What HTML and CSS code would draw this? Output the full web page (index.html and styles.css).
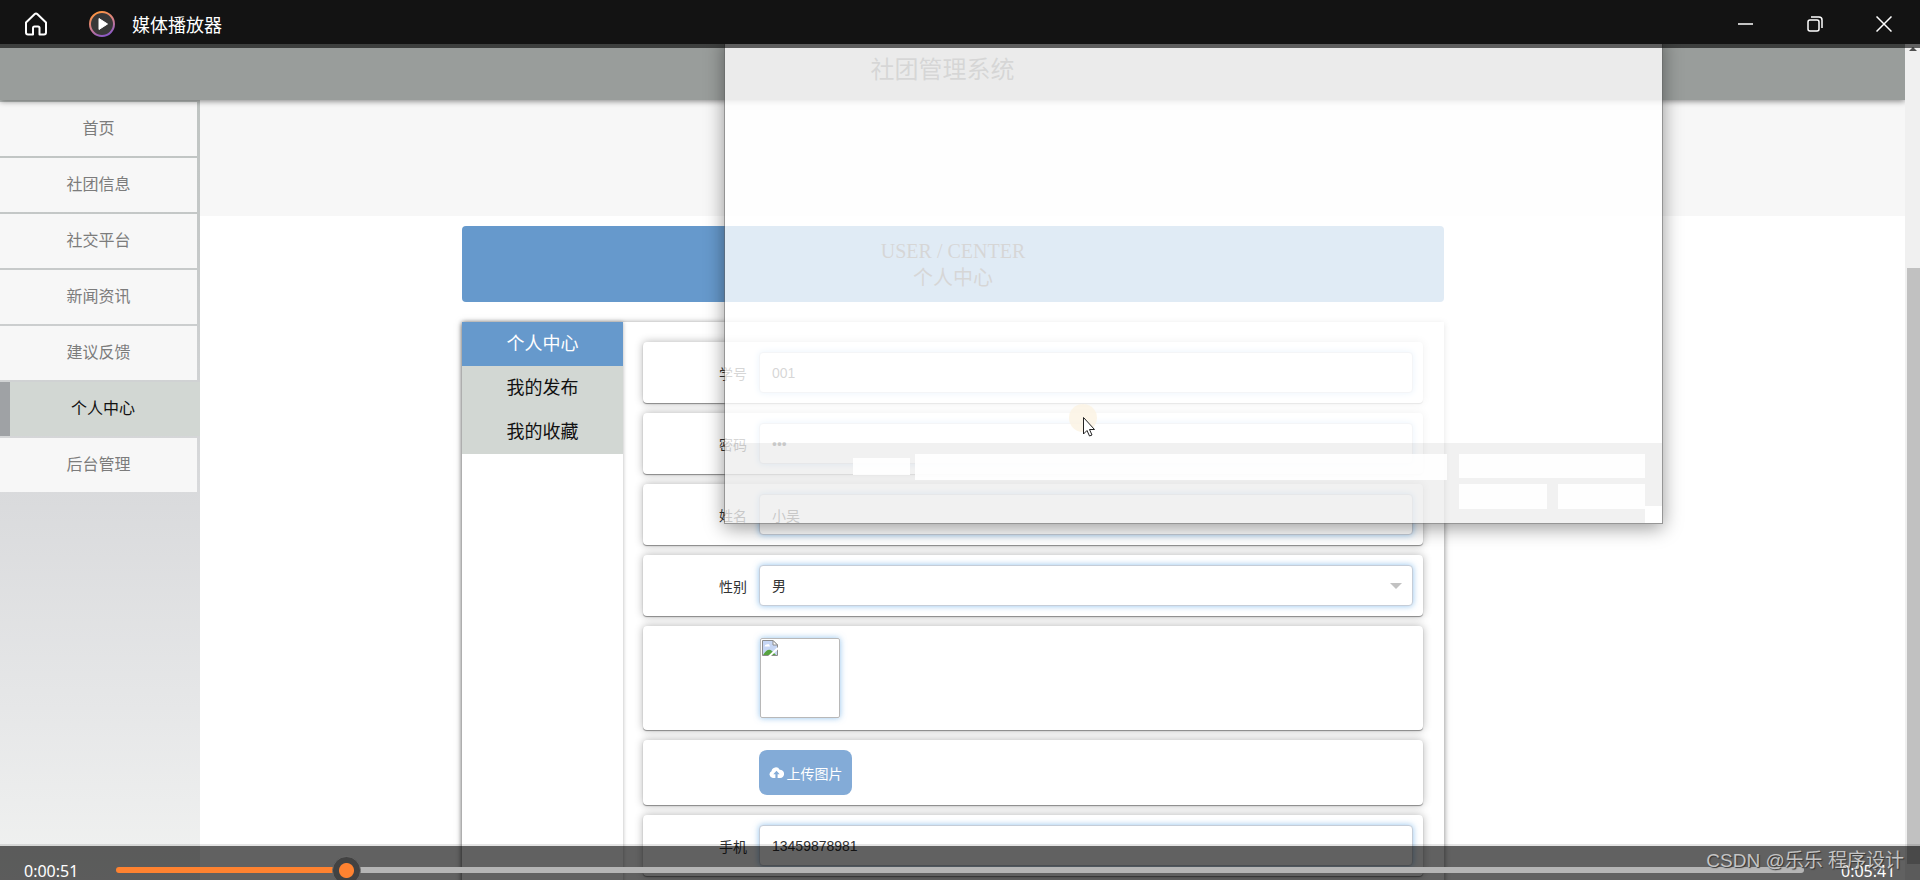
FILE: index.html
```html
<!DOCTYPE html>
<html lang="zh-CN">

<head>
    <meta charset="UTF-8">
    <title>媒体播放器</title>
    <link rel="stylesheet" href="styles.css">
</head>

<body>
    <div class="player">
        <!-- 标题栏 -->
        <header class="titlebar">
            <button class="icon-btn home-btn" aria-label="主页">
                <svg width="24" height="26" viewBox="0 0 24 26" fill="none" stroke="#fff" stroke-width="2" stroke-linejoin="round">
                    <path d="M2 11.5 10.500 3.200Q12 1.800 13.500 3.200L22 11.500V21.500Q22 23.500 20 23.500H15.500V17Q15.500 15.500 14 15.500H10.500Q9 15.500 9 17V23.500H4Q2 23.500 2 21.500Z" />
                </svg>
            </button>
            <svg class="logo" width="28" height="28" viewBox="0 0 28 28">
                <defs>
                    <linearGradient id="ring" x1="0.3" y1="0" x2="0.7" y2="1">
                        <stop offset="0" stop-color="#ff9540" />
                        <stop offset="0.5" stop-color="#d17f8d" />
                        <stop offset="1" stop-color="#8757c8" />
                    </linearGradient>
                </defs>
                <circle cx="14" cy="14" r="12" fill="#383838" stroke="url(#ring)" stroke-width="2" />
                <path d="M11 8.500V19.500L19.500 14Z" fill="#fff" stroke="#fff" stroke-linejoin="round" />
            </svg>
            <span class="app-name">媒体播放器</span>
            <div class="window-buttons">
                <button class="icon-btn" aria-label="最小化">
                    <svg width="16" height="16" viewBox="0 0 16 16"><path d="M0 8H15" stroke="#fff" stroke-width="1.500" /></svg>
                </button>
                <button class="icon-btn" aria-label="还原">
                    <svg width="16" height="16" viewBox="0 0 16 16" fill="none" stroke="#fff" stroke-width="1.500">
                        <rect x="1" y="4" width="11" height="11" rx="2" />
                        <path d="M4 1H12Q15 1 15 4V12" />
                    </svg>
                </button>
                <button class="icon-btn" aria-label="关闭">
                    <svg width="16" height="16" viewBox="0 0 16 16"><path d="M0.500 0.500 15.500 15.500M15.500 0.500 0.500 15.500" stroke="#fff" stroke-width="1.500" /></svg>
                </button>
            </div>
        </header>

        <!-- 视频画面 -->
        <div class="screen">
            <div class="page">
                <div class="page-header">
                    <h1>社团管理系统</h1>
                </div>
                <div class="page-body">
                    <nav class="sidebar">
                        <a href="#">首页</a>
                        <a href="#">社团信息</a>
                        <a href="#">社交平台</a>
                        <a href="#">新闻资讯</a>
                        <a href="#">建议反馈</a>
                        <a href="#" class="active">个人中心</a>
                        <a href="#">后台管理</a>
                    </nav>
                    <main class="content">
                        <div class="banner"></div>
                        <div class="container">
                            <div class="center-title">
                                <span>USER / CENTER</span>
                                <span>个人中心</span>
                            </div>
                            <div class="panel">
                                <div class="panel-menu">
                                    <a href="#" class="active">个人中心</a>
                                    <a href="#">我的发布</a>
                                    <a href="#">我的收藏</a>
                                </div>
                                <form class="panel-form">
                                    <div class="form-item">
                                        <label for="xuehao">学号</label>
                                        <input id="xuehao" type="text" value="001">
                                    </div>
                                    <div class="form-item">
                                        <label for="mima">密码</label>
                                        <input id="mima" type="password" value="001">
                                    </div>
                                    <div class="form-item">
                                        <label for="xingming">姓名</label>
                                        <input id="xingming" type="text" value="小吴">
                                    </div>
                                    <div class="form-item">
                                        <label for="xingbie">性别</label>
                                        <div class="select-box">
                                            <select id="xingbie">
                                                <option>男</option>
                                                <option>女</option>
                                            </select>
                                        </div>
                                    </div>
                                    <div class="form-item photo-item">
                                        <div class="photo">
                                            <svg width="16" height="16" viewBox="0 0 16 16">
                                                <path d="M0.500 0.500H11L15.500 5V15.500H0.500Z" fill="#c6d6f4" stroke="#8c8c8c" />
                                                <path d="M2.500 6.500Q3 4 5 4.500Q7 3 8 6.500Z" fill="#fff" />
                                                <path d="M1 15Q6 7 10 11L14 15Z" fill="#57a33f" />
                                                <path d="M16 8 7 16.500" stroke="#fff" stroke-width="2" />
                                                <path d="M11 0.500V5H15.500Z" fill="#fff" stroke="#8c8c8c" />
                                            </svg>
                                        </div>
                                    </div>
                                    <div class="form-item">
                                        <button type="button" class="upload-btn">
                                            <svg width="15" height="11" viewBox="0 0 16 12">
                                                <path d="M4 12A4 4 0 0 1 2.500 4.500A4.800 4.800 0 0 1 11.500 3A4.500 4.500 0 0 1 12 12Z" fill="#fff" />
                                                <path d="M8 4 11.500 8H9.200V12H6.800V8H4.500Z" fill="#83abd7" />
                                            </svg>
                                            上传图片
                                        </button>
                                    </div>
                                    <div class="form-item">
                                        <label for="shouji">手机</label>
                                        <input id="shouji" type="text" value="13459878981">
                                    </div>
                                </form>
                            </div>
                        </div>
                    </main>
                </div>
            </div>
            <div class="scrollbar">
                <div class="scroll-arrow"></div>
                <div class="scroll-thumb"></div>
            </div>

            <!-- 正在淡出的窗口 -->
            <div class="ghost-window">
                <div class="ghost-body"></div>
                <div class="ghost-footer">
                    <div class="ghost-block small"></div>
                    <div class="ghost-block wide"></div>
                    <div class="ghost-grid">
                        <div class="ghost-block full"></div>
                        <div class="ghost-block"></div>
                        <div class="ghost-block"></div>
                    </div>
                    <div class="ghost-corner"></div>
                </div>
            </div>

            <!-- 鼠标指针 -->
            <svg class="cursor" width="36" height="40" viewBox="0 0 36 40">
                <circle cx="15" cy="15" r="14" fill="#fbf3e2" fill-opacity="0.8" />
                <path d="M15.500 14.500V31L19 27.500L21.500 33L24 32L21.500 26.500H26.500Z" fill="#fff" stroke="#222" />
            </svg>
        </div>

        <!-- 播放控制条 -->
        <div class="controls">
            <span class="time">0:00:51</span>
            <input class="progress" type="range" min="0" max="100" value="13" aria-label="播放进度">
            <span class="time">0:05:41</span>
        </div>
        <div class="watermark">CSDN @乐乐 程序设计</div>
    </div>
</body>

</html>
```

FILE: styles.css
```css
* {
    box-sizing: border-box;
}

body {
    margin: 0;
    font-family: "Liberation Sans", "Noto Sans CJK SC", sans-serif;
    font-size: 14px;
    color: #333;
    background-color: #fff;
}

a {
    text-decoration: none;
}

button {
    font-family: inherit;
    border: none;
    padding: 0;
    cursor: pointer;
}

.player {
    position: relative;
    display: flex;
    flex-direction: column;
    height: 100vh;
    overflow: hidden;
}

/* 标题栏 */
.titlebar {
    position: relative;
    z-index: 10;
    display: flex;
    align-items: center;
    flex-shrink: 0;
    height: 48px;
    padding: 0 12px 0 24px;
    background: linear-gradient(#131313 44px, rgba(0, 0, 0, 0.6) 44px);
}

.icon-btn {
    display: flex;
    align-items: center;
    justify-content: center;
    width: 48px;
    background: none;
}

.home-btn {
    width: 24px;
    margin-right: 40px;
}

.app-name {
    margin-left: 16px;
    font-family: "Noto Sans CJK SC", sans-serif;
    font-size: 18px;
    line-height: 24px;
    color: #fff;
}

.window-buttons {
    display: flex;
    gap: 21px;
    margin-left: auto;
}

/* 视频画面 */
.screen {
    position: relative;
    display: flex;
    flex: 1;
    min-height: 0;
}

/* 页面顶部延伸到半透明的标题栏边缘下面 */
.page {
    flex: 1;
    display: flex;
    flex-direction: column;
    min-width: 0;
    margin-top: -4px;
    overflow: hidden;
    background-color: #fff;
}

.page-header {
    position: relative;
    flex-shrink: 0;
    height: 56px;
    padding-top: 4px;
    background-color: #999d9b;
    box-shadow: 0 1px 6px rgba(0, 0, 0, 0.5);
}

.page-header h1 {
    margin: 0;
    padding-right: 20px;
    font-size: 24px;
    font-weight: normal;
    line-height: 44px;
    text-align: center;
}

.page-body {
    display: flex;
    flex: 1;
    min-height: 0;
}

/* 左侧导航 */
.sidebar {
    display: flex;
    flex-direction: column;
    flex-shrink: 0;
    gap: 2px;
    width: 200px;
    padding-top: 2px;
    background: linear-gradient(#bfc4c2, #c6c9c9 20%, #d9dadc 50%, #e6e7e8 78%, #f1f2f1);
}

.sidebar a {
    width: 197px;
    height: 54px;
    font-size: 16px;
    line-height: 54px;
    text-align: center;
    color: #7c7c7c;
    background-color: #f7f7f7;
}

.sidebar a.active {
    width: 200px;
    padding-right: 4px;
    color: #111;
    border-left: 10px solid #9fa2a5;
    background-color: #d2d7d3;
}

.content {
    flex: 1;
    min-width: 0;
}

.banner {
    height: 116px;
    background-color: #f7f7f7;
}

.container {
    width: 982px;
    margin: 10px 0 0 262px;
}

.center-title {
    display: flex;
    flex-direction: column;
    align-items: center;
    height: 76px;
    padding-top: 12px;
    font-family: "Liberation Serif", "Noto Sans CJK SC", serif;
    font-size: 20px;
    line-height: 27px;
    border-radius: 4px;
    background-color: #6699cc;
}

/* 个人中心面板 */
.panel {
    display: flex;
    margin-top: 20px;
    box-shadow: 0 1px 6px rgba(0, 0, 0, 0.5);
}

.panel-menu {
    display: flex;
    flex-direction: column;
    width: 161px;
    box-shadow: 0 0 4px rgba(0, 0, 0, 0.3);
}

.panel-menu a {
    height: 44px;
    font-size: 18px;
    line-height: 44px;
    text-align: center;
    color: #111;
    background-color: #d2d7d3;
}

.panel-menu a.active {
    color: #fff;
    background-color: #6699cc;
}

.panel-form {
    display: flex;
    flex-direction: column;
    flex: 1;
    gap: 10px;
    padding: 20px 21px 20px 20px;
}

.form-item {
    display: grid;
    grid-template-columns: 104px 1fr;
    column-gap: 12px;
    align-items: center;
    padding: 10px;
    padding-left: 0;
    border-radius: 4px;
    background-color: #fff;
    box-shadow: 0 1px 1px #888, 0 0 8px rgba(0, 0, 0, 0.3);
}

.form-item label {
    text-align: right;
}

.form-item input,
.form-item select {
    width: 100%;
    height: 41px;
    padding: 0 12px;
    font-family: inherit;
    font-size: 14px;
    color: #333;
    border: 1px solid #c5cdd8;
    border-radius: 4px;
    background-color: #fff;
    box-shadow: 0 0 6px rgba(102, 170, 230, 0.7);
}

.form-item select {
    appearance: none;
}

.select-box {
    position: relative;
}

.select-box::after {
    content: "";
    position: absolute;
    top: 18px;
    right: 11px;
    border: 6px solid transparent;
    border-top-color: #c2c2c2;
    pointer-events: none;
}

.photo-item {
    padding-top: 12px;
    padding-bottom: 12px;
}

.photo {
    grid-column: 2;
    width: 80px;
    height: 80px;
    padding: 1px;
    margin-left: 1px;
    border: 1px solid #b8b8b8;
    border-radius: 2px;
    box-shadow: 0 0 6px rgba(102, 170, 230, 0.7);
}

.photo svg {
    display: block;
}

.upload-btn {
    grid-column: 2;
    display: flex;
    align-items: center;
    justify-content: center;
    gap: 3px;
    width: 93px;
    height: 45px;
    font-size: 14px;
    color: #fff;
    border-radius: 8px;
    background-color: #83abd7;
}

/* 页面滚动条 */
.scrollbar {
    display: flex;
    flex-direction: column;
    width: 15px;
    margin-top: -4px;
    padding: 3px 0 0 2px;
    background-color: #f0f0f0;
}

.scroll-arrow {
    align-self: center;
    margin-right: 2px;
    border: 4px solid transparent;
    border-top: none;
    border-bottom-color: #505050;
}

.scroll-thumb {
    height: 596px;
    margin-top: 217px;
    background-color: #c1c1c1;
}

/* 淡出的窗口 */
.ghost-window {
    position: absolute;
    top: -12px;
    left: 724px;
    display: flex;
    flex-direction: column;
    width: 939px;
    height: 488px;
    border: 1px solid rgba(80, 80, 80, 0.6);
    box-shadow: 0 4px 18px rgba(0, 0, 0, 0.4);
}

.ghost-body {
    flex: 1;
    background-color: rgba(255, 255, 255, 0.8);
}

.ghost-footer {
    position: relative;
    display: flex;
    gap: 5px;
    height: 80px;
    padding: 11px 17px 0 128px;
    background-color: rgba(238, 238, 238, 0.8);
}

.ghost-block {
    background-color: rgba(255, 255, 255, 0.9);
}

.ghost-block.small {
    width: 57px;
    height: 17px;
    margin-top: 4px;
}

.ghost-block.wide {
    flex: 1;
    height: 26px;
}

.ghost-grid {
    display: grid;
    grid-template-columns: 1fr 1fr;
    grid-template-rows: 24px 25px;
    gap: 6px 11px;
    width: 186px;
    margin-left: 7px;
}

.ghost-block.full {
    grid-column: 1 / 3;
}

.ghost-corner {
    position: absolute;
    right: 0;
    bottom: 0;
    width: 17px;
    height: 17px;
    background-color: #fff;
}

.cursor {
    position: absolute;
    top: 355px;
    left: 1068px;
}

/* 播放控制条 */
.controls {
    position: absolute;
    right: 0;
    bottom: 0;
    left: 0;
    display: flex;
    align-items: flex-start;
    height: 36px;
    padding: 13px 24px 0;
    border-top: 2px solid rgba(0, 0, 0, 0.1);
    background-color: rgba(0, 0, 0, 0.62);
    background-clip: padding-box;
}

.time {
    width: 55px;
    font-family: "Noto Sans", sans-serif;
    font-size: 16px;
    line-height: 24px;
    color: #fff;
}

.progress {
    flex: 1;
    height: 30px;
    margin: -4px 37px 0;
    appearance: none;
    background: none;
}

.progress::-webkit-slider-runnable-track {
    height: 6px;
    border-radius: 3px;
    background: linear-gradient(to right, #ff8230 14%, #b5b5b5 14%);
}

.progress::-webkit-slider-thumb {
    appearance: none;
    width: 29px;
    height: 29px;
    margin-top: -11px;
    border: 1px solid #666;
    border-radius: 50%;
    background: radial-gradient(circle, #ff8230 7px, #424242 8px);
}

.watermark {
    position: absolute;
    right: 16px;
    bottom: 5px;
    font-size: 19px;
    line-height: 28px;
    color: #c4c4c4;
    text-shadow: 1px 1px 1px #333;
}
```
